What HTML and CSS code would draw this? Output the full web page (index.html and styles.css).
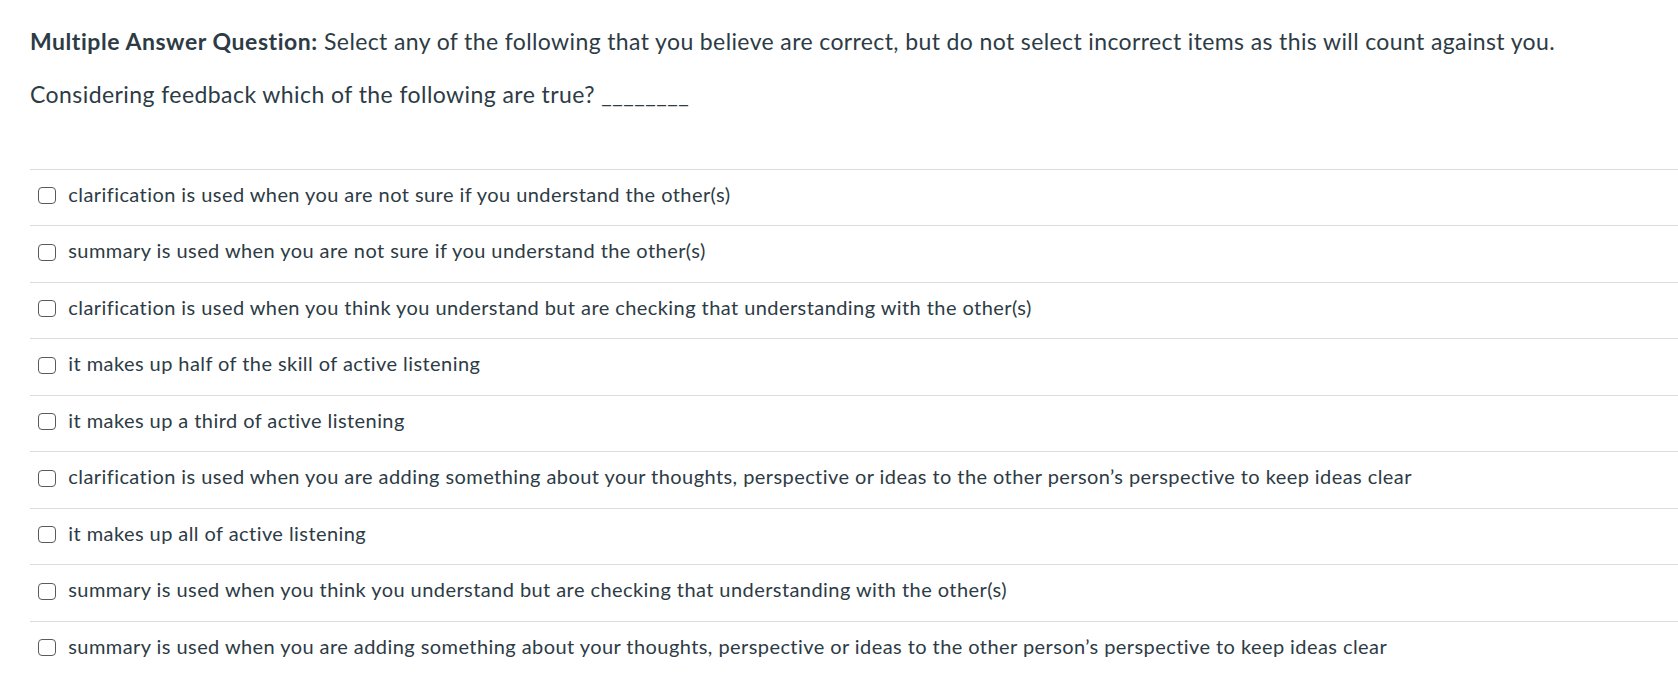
FILE: index.html
```html
<!DOCTYPE html>
<html lang="en">
<head>
<meta charset="utf-8">
<title>Multiple Answer Question</title>
<link rel="stylesheet" href="styles.css">
</head>
<body>
<div class="question">
  <p class="instructions"><strong>Multiple Answer Question:</strong> Select any of the following that you believe are correct, but do not select incorrect items as this will count against you.</p>
  <p class="prompt">Considering feedback which of the following are true? ________</p>
  <ul class="answers">
    <li class="answer"><span class="box"></span><span class="label">clarification is used when you are not sure if you understand the other(s)</span></li>
    <li class="answer"><span class="box"></span><span class="label">summary is used when you are not sure if you understand the other(s)</span></li>
    <li class="answer"><span class="box"></span><span class="label">clarification is used when you think you understand but are checking that understanding with the other(s)</span></li>
    <li class="answer"><span class="box"></span><span class="label">it makes up half of the skill of active listening</span></li>
    <li class="answer"><span class="box"></span><span class="label">it makes up a third of active listening</span></li>
    <li class="answer"><span class="box"></span><span class="label">clarification is used when you are adding something about your thoughts, perspective or ideas to the other person’s perspective to keep ideas clear</span></li>
    <li class="answer"><span class="box"></span><span class="label">it makes up all of active listening</span></li>
    <li class="answer"><span class="box"></span><span class="label">summary is used when you think you understand but are checking that understanding with the other(s)</span></li>
    <li class="answer"><span class="box"></span><span class="label">summary is used when you are adding something about your thoughts, perspective or ideas to the other person’s perspective to keep ideas clear</span></li>
  </ul>
</div>
</body>
</html>
```
FILE: styles.css
```css
html, body {
  margin: 0;
  padding: 0;
  background: #ffffff;
}
body {
  font-family: Lato, "Open Sans", "Liberation Sans", sans-serif;
  color: #2d3b45;
}
.question {
  padding: 25.4px 0 0 30px;
}
.instructions {
  margin: 0;
  font-size: 23px;
  line-height: 33px;
  letter-spacing: 0.38px;
  white-space: nowrap;
}
.instructions strong {
  font-weight: 700;
  letter-spacing: 0.55px;
}
.prompt {
  margin: 19.4px 0 0;
  font-size: 23px;
  line-height: 33px;
  letter-spacing: 0.43px;
}
.answers {
  list-style: none;
  margin: 58.2px 0 0;
  padding: 0;
}
.answer {
  display: flex;
  align-items: flex-start;
  border-top: 1px solid #dcdcdc;
  padding: 9.8px 0 17.7px 7.7px;
  font-size: 20px;
  line-height: 28px;
  letter-spacing: 0.43px;
}
.box {
  flex: none;
  width: 18px;
  height: 17px;
  box-sizing: border-box;
  margin-top: 7.4px;
  margin-right: 12.6px;
  border: 1.5px solid #5a5a5a;
  border-radius: 4px;
  background: #fff;
}
.label {
  white-space: nowrap;
}
```
